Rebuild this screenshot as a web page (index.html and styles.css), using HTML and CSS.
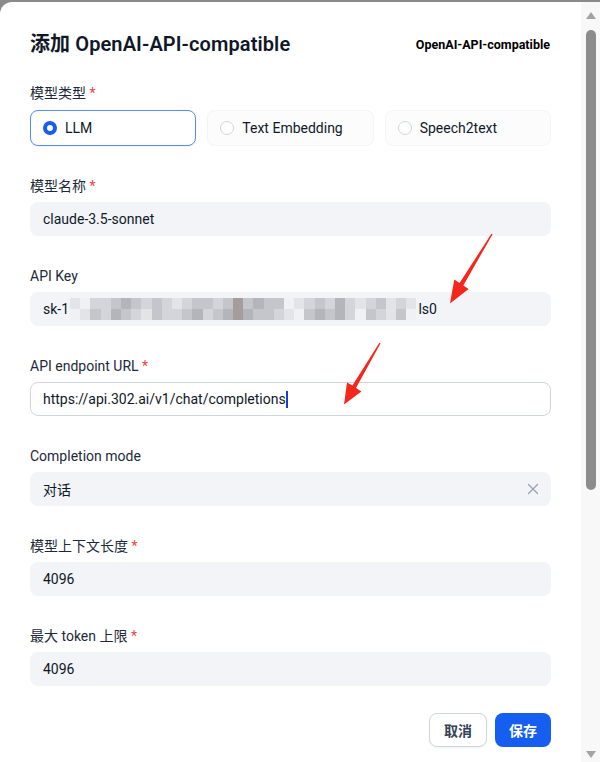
FILE: index.html
```html
<!DOCTYPE html>
<html lang="zh">
<head>
<meta charset="utf-8">
<title>添加 OpenAI-API-compatible</title>
<link rel="stylesheet" href="styles.css">
</head>
<body>
<div class="frame">
  <div class="card">
    <div class="header">
      <div class="title">添加 OpenAI-API-compatible</div>
      <div class="provider">OpenAI-API-compatible</div>
    </div>

    <div class="field first">
      <div class="label">模型类型 <span class="req">*</span></div>
      <div class="radios">
        <div class="radio selected"><span class="dot"></span><span>LLM</span></div>
        <div class="radio"><span class="dot"></span><span>Text Embedding</span></div>
        <div class="radio"><span class="dot"></span><span>Speech2text</span></div>
      </div>
    </div>

    <div class="field">
      <div class="label">模型名称 <span class="req">*</span></div>
      <div class="input">claude-3.5-sonnet</div>
    </div>

    <div class="field">
      <div class="label">API Key</div>
      <div class="input key">
        <span>sk-1</span>
        <span class="mosaic">
          <i class="m1"></i><i class="m0"></i><i class="m2"></i><i class="m2"></i><i class="m3"></i><i class="m4"></i><i class="m3"></i><i class="m2"></i><i class="m3"></i><i class="m2"></i><i class="m1"></i><i class="m2"></i><i class="m3"></i><i class="m3"></i><i class="m2"></i><i class="m3"></i><i class="m5"></i><i class="m3"></i><i class="m4"></i><i class="m3"></i><i class="m3"></i><i class="m0"></i><i class="m1"></i><i class="m2"></i><i class="m3"></i><i class="m2"></i><i class="m4"></i><i class="m2"></i><i class="m1"></i><i class="m2"></i><i class="m3"></i><i class="m1"></i><i class="m2"></i><i class="m1"></i>
          <i class="m0"></i><i class="m1"></i><i class="m3"></i><i class="m2"></i><i class="m4"></i><i class="m3"></i><i class="m2"></i><i class="m1"></i><i class="m3"></i><i class="m2"></i><i class="m2"></i><i class="m3"></i><i class="m4"></i><i class="m2"></i><i class="m3"></i><i class="m4"></i><i class="m5"></i><i class="m4"></i><i class="m3"></i><i class="m3"></i><i class="m2"></i><i class="m1"></i><i class="m0"></i><i class="m3"></i><i class="m4"></i><i class="m3"></i><i class="m4"></i><i class="m2"></i><i class="m0"></i><i class="m3"></i><i class="m2"></i><i class="m1"></i><i class="m3"></i><i class="m0"></i>
        </span>
        <span>ls0</span>
      </div>
    </div>

    <div class="field">
      <div class="label">API endpoint URL <span class="req">*</span></div>
      <div class="input focused">https://api.302.ai/v1/chat/completions<span class="caret"></span></div>
    </div>

    <div class="field">
      <div class="label">Completion mode</div>
      <div class="input select">
        <span>对话</span>
        <svg class="clear" width="12" height="12" viewBox="0 0 12 12"><path d="M1.5 1.5 L10.5 10.5 M10.5 1.5 L1.5 10.5" stroke="#98a2b3" stroke-width="1.3" stroke-linecap="round" fill="none"/></svg>
      </div>
    </div>

    <div class="field">
      <div class="label">模型上下文长度 <span class="req">*</span></div>
      <div class="input">4096</div>
    </div>

    <div class="field">
      <div class="label">最大 token 上限 <span class="req">*</span></div>
      <div class="input">4096</div>
    </div>

    <div class="actions">
      <button class="btn cancel">取消</button>
      <button class="btn save">保存</button>
    </div>
  </div>

  <div class="scrollbar">
    <span class="arrow up"></span>
    <span class="thumb"></span>
    <span class="spacer"></span>
    <span class="arrow down"></span>
  </div>
</div>

<svg class="annot" width="600" height="762" viewBox="0 0 600 762">
  <polygon fill="#f5261b" points="492.6,234.3 463.3,285.4 468.6,289.0 450,303.5 454.3,279.6 459.6,283.0 491.4,233.7"/>
  <polygon fill="#f5261b" points="380.6,343.3 356.0,388.0 361.4,391.4 344,404.5 347.0,382.4 352.4,385.6 379.4,342.7"/>
</svg>
</body>
</html>
```

FILE: styles.css
```css
html, body {
  margin: 0;
  padding: 0;
}
body {
  width: 600px;
  height: 762px;
  overflow: hidden;
  background: #8a8a8a;
  font-family: Roboto, "Noto Sans CJK SC", sans-serif;
  color: #101828;
  position: relative;
}
.frame {
  display: flex;
  margin-top: 2px;
  height: 760px;
}
.card {
  flex: 1;
  background: #ffffff;
  border-top-left-radius: 12px;
  padding: 30px 30px 0 30px;
}
.header {
  display: flex;
  justify-content: space-between;
  align-items: center;
  height: 24px;
}
.title {
  font-size: 20px;
  font-weight: 600;
  line-height: 24px;
  color: #101828;
  letter-spacing: 0.1px;
}
.provider {
  font-size: 12.5px;
  font-weight: 700;
  color: #000;
  padding-right: 1px;
}
.field {
  margin-top: 30px;
}
.field.first {
  margin-top: 27px;
}
.label {
  font-size: 14px;
  line-height: 20px;
  height: 20px;
  color: #1d2939;
  margin-bottom: 6px;
}
.field.first .label {
  margin-bottom: 7px;
}
.req {
  color: #f04438;
}
.radios {
  display: grid;
  grid-template-columns: 1fr 1fr 1fr;
  gap: 11px;
}
.radio {
  height: 36px;
  box-sizing: border-box;
  border: 1px solid #f2f4f7;
  background: #fcfcfd;
  border-radius: 8px;
  display: flex;
  align-items: center;
  padding-left: 12px;
  gap: 8px;
  font-size: 14px;
  color: #101828;
}
.radio .dot {
  width: 14px;
  height: 14px;
  box-sizing: border-box;
  border-radius: 50%;
  border: 1px solid #d0d5dd;
  background: #fff;
}
.radio.selected {
  border-color: #528bff;
  background: #ffffff;
  box-shadow: 0 1px 2px rgba(16, 24, 40, 0.06);
}
.radio.selected .dot {
  border: 4px solid #155eef;
}
.input {
  height: 34px;
  box-sizing: border-box;
  background: #f2f4f7;
  border-radius: 8px;
  padding: 0 13px;
  display: flex;
  align-items: center;
  font-size: 14px;
  color: #101828;
}
.input.focused {
  background: #ffffff;
  border: 1px solid #d0d5dd;
  padding-left: 12px;
}
.caret {
  display: inline-block;
  width: 2px;
  height: 17px;
  background: #1a3fd0;
  margin-left: 0;
}
.input.select {
  justify-content: space-between;
  padding-right: 12px;
}
.key {
  gap: 0;
}
.mosaic {
  display: grid;
  grid-template-columns: repeat(34, 10.2px);
  grid-template-rows: 11px 11px;
  margin: 0 2px 0 1px;
}
.mosaic i {
  display: block;
}
.m0 { background: #f0f1f4; }
.m1 { background: #e3e4e8; }
.m2 { background: #d4d5da; }
.m3 { background: #c5c6cb; }
.m4 { background: #b4b5bb; }
.m5 { background: #a59c9c; }
.actions {
  display: flex;
  justify-content: flex-end;
  gap: 8px;
  margin-top: 27px;
}
.btn {
  height: 34px;
  box-sizing: border-box;
  border-radius: 8px;
  font-family: Roboto, "Noto Sans CJK SC", sans-serif;
  font-size: 14px;
  font-weight: 600;
  padding: 0;
  cursor: pointer;
}
.cancel {
  width: 58px;
  background: #ffffff;
  border: 1px solid #d0d5dd;
  color: #344054;
  box-shadow: 0 1px 2px rgba(16, 24, 40, 0.05);
}
.save {
  width: 56px;
  background: #155eef;
  border: none;
  color: #ffffff;
}
.scrollbar {
  width: 19px;
  background: #f8f8f8;
  display: flex;
  flex-direction: column;
  align-items: center;
  padding: 10px 0 4px 0;
  box-sizing: border-box;
}
.arrow {
  width: 0;
  height: 0;
  border-left: 5px solid transparent;
  border-right: 5px solid transparent;
}
.arrow.up {
  border-bottom: 7px solid #a3a3a3;
}
.arrow.down {
  border-top: 7px solid #a3a3a3;
}
.thumb {
  width: 10px;
  height: 460px;
  margin-top: 11px;
  background: #8c8c8c;
  border-radius: 5px;
}
.spacer {
  flex: 1;
}
.annot {
  position: absolute;
  left: 0;
  top: 0;
  pointer-events: none;
}
```
